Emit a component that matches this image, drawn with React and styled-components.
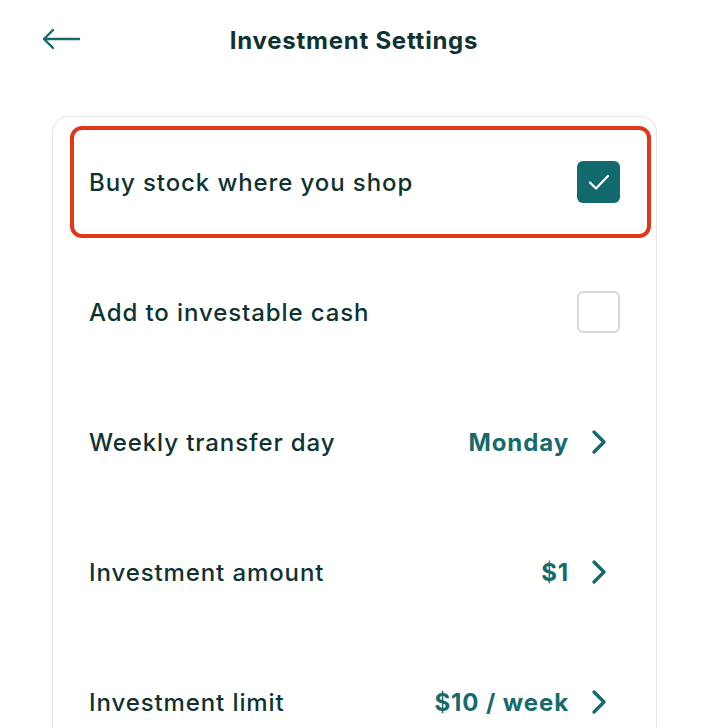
import React from 'react';
import styled, { createGlobalStyle } from 'styled-components';

const GlobalStyle = createGlobalStyle`
  html, body {
    margin: 0;
    padding: 0;
    background: #ffffff;
    overflow: hidden;
  }
  body {
    font-family: Inter, "Liberation Sans", sans-serif;
    color: #0f3232;
  }
`;

const Screen = styled.div`
  width: 708px;
  height: 728px;
  overflow: hidden;
  background: #fff;
`;

const Header = styled.header`
  position: relative;
  height: 82px;
  display: flex;
  align-items: center;
  justify-content: center;
`;

const BackButton = styled.button`
  position: absolute;
  left: 40px;
  top: 25px;
  width: 42px;
  height: 28px;
  padding: 0;
  border: none;
  background: none;
  display: flex;
  align-items: center;
  justify-content: center;
  color: #176a6c;
`;

const Title = styled.h1`
  margin: 0;
  margin-top: -1px;
  font-size: 24px;
  font-weight: 700;
  letter-spacing: 0.75px;
  color: #0f3232;
`;

const Card = styled.section`
  margin: 34px 51px 0 52px;
  border: 1.5px solid #e4e7e7;
  border-bottom: none;
  border-radius: 16px 16px 0 0;
  display: flex;
  flex-direction: column;
`;

const Row = styled.div`
  position: relative;
  height: 130px;
  display: flex;
  align-items: center;
  justify-content: space-between;
  padding: 0 36px 0 36px;
  box-sizing: border-box;
`;

const Highlight = styled.div`
  position: absolute;
  left: 17px;
  right: 5px;
  top: 9px;
  bottom: 9px;
  border: 4px solid #e2361a;
  border-radius: 12px;
  pointer-events: none;
`;

const Label = styled.span`
  font-size: 24px;
  font-weight: 500;
  letter-spacing: 0.9px;
  color: #0f3232;
`;

const Box = styled.span`
  width: 43px;
  height: 42px;
  box-sizing: border-box;
  border-radius: 6px;
  display: flex;
  align-items: center;
  justify-content: center;
  background: ${p => (p.$checked ? '#136a6e' : '#fff')};
  border: ${p => (p.$checked ? 'none' : '2px solid #d6d9d9')};
`;

const Value = styled.span`
  display: flex;
  align-items: center;
  gap: 21px;
  margin-right: 12px;
  font-size: 24px;
  font-weight: 700;
  letter-spacing: 0.9px;
  color: #176a6c;
`;

const Check = () => (
  <svg width="22" height="18" viewBox="0 0 22 18" fill="none">
    <path d="M2 9.5l6 6L20 3" stroke="#fff" strokeWidth="2.2" strokeLinecap="round" strokeLinejoin="round" />
  </svg>
);

const Chevron = () => (
  <svg width="18" height="26" viewBox="0 0 18 26" fill="none">
    <path d="M4 3l10 10L4 23" stroke="#176a6c" strokeWidth="3.4" strokeLinecap="round" strokeLinejoin="round" />
  </svg>
);

const Arrow = () => (
  <svg width="40" height="22" viewBox="0 0 40 22" fill="none">
    <path d="M38 11H3M12 2L3 11l9 9" stroke="#176a6c" strokeWidth="2.4" strokeLinecap="round" strokeLinejoin="round" />
  </svg>
);

const rows = [
  { label: 'Buy stock where you shop', checked: true, highlight: true },
  { label: 'Add to investable cash', checked: false },
  { label: 'Weekly transfer day', value: 'Monday' },
  { label: 'Investment amount', value: '$1' },
  { label: 'Investment limit', value: '$10 / week' },
];

export default function App() {
  return (
    <Screen>
      <GlobalStyle />
      <Header>
        <BackButton aria-label="Back"><Arrow /></BackButton>
        <Title>Investment Settings</Title>
      </Header>
      <Card>
        {rows.map(r => (
          <Row key={r.label}>
            {r.highlight && <Highlight />}
            <Label>{r.label}</Label>
            {r.value ? (
              <Value>{r.value}<Chevron /></Value>
            ) : (
              <Box $checked={r.checked}>{r.checked && <Check />}</Box>
            )}
          </Row>
        ))}
      </Card>
    </Screen>
  );
}
